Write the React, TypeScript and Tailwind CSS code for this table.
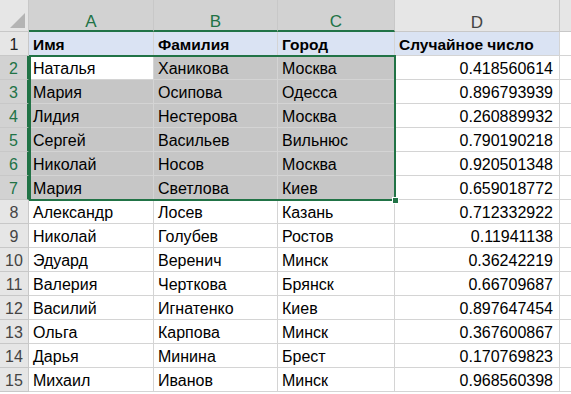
import React from 'react';

const rows = [
  ['Наталья', 'Ханикова', 'Москва', '0.418560614'],
  ['Мария', 'Осипова', 'Одесса', '0.896793939'],
  ['Лидия', 'Нестерова', 'Москва', '0.260889932'],
  ['Сергей', 'Васильев', 'Вильнюс', '0.790190218'],
  ['Николай', 'Носов', 'Москва', '0.920501348'],
  ['Мария', 'Светлова', 'Киев', '0.659018772'],
  ['Александр', 'Лосев', 'Казань', '0.712332922'],
  ['Николай', 'Голубев', 'Ростов', '0.11941138'],
  ['Эдуард', 'Веренич', 'Минск', '0.36242219'],
  ['Валерия', 'Черткова', 'Брянск', '0.66709687'],
  ['Василий', 'Игнатенко', 'Киев', '0.897647454'],
  ['Ольга', 'Карпова', 'Минск', '0.367600867'],
  ['Дарья', 'Минина', 'Брест', '0.170769823'],
  ['Михаил', 'Иванов', 'Минск', '0.968560398'],
];

const cols = ['A', 'B', 'C', 'D'];

export default function App() {
  return (
    <div className="relative w-[571px] h-[394px] overflow-hidden bg-white text-[16px] text-black" style={{ fontFamily: '"Liberation Sans", Arial, sans-serif' }}>
      <div className="grid grid-cols-[29px_125px_124px_117px_165px_1fr]">
        {/* column header row */}
        <div className="relative h-[32px] bg-[#e6e6e6] border-r border-b border-[#c8c8c8]">
          <div className="absolute right-[3px] bottom-[3px] w-0 h-0 border-l-[15px] border-l-transparent border-b-[15px] border-b-[#b4b4b4]" />
        </div>
        {cols.map((c) => {
          const sel = c !== 'D';
          return (
            <div
              key={c}
              className={`h-[32px] flex items-center justify-center pt-[14px] text-[17px] border-r border-[#c8c8c8] ${sel ? 'bg-[#d2d2d2] text-[#217346] border-b-2 border-b-[#217346]' : 'bg-[#e6e6e6] text-[#444] border-b border-b-[#c8c8c8]'}`}
            >
              {c}
            </div>
          );
        })}
        <div className="h-[32px] bg-[#e6e6e6] border-b border-[#c8c8c8]" />

        {/* row 1 */}
        <div className="h-[24px] flex items-center justify-center pt-[3px] bg-[#e6e6e6] text-[#222] border-r border-b border-[#c8c8c8]">1</div>
        {['Имя', 'Фамилия', 'Город', 'Случайное число'].map((t) => (
          <div key={t} className="h-[24px] flex items-center pl-[4px] pt-[3px] text-[15.5px] font-bold bg-[#dae3f3] border-r border-b border-[#d4d4d4]">
            {t}
          </div>
        ))}
        <div className="h-[24px] border-b border-[#d4d4d4]" />

        {rows.map((r, i) => {
          const n = i + 2;
          const selRow = n <= 7;
          return (
            <React.Fragment key={n}>
              <div
                className={`h-[24px] flex items-center justify-center pt-[3px] border-b border-[#c8c8c8] ${selRow ? 'bg-[#d2d2d2] text-[#217346] border-r-2 border-r-[#217346]' : 'bg-[#e6e6e6] text-[#444] border-r border-r-[#c8c8c8]'}`}
              >
                {n}
              </div>
              {r.slice(0, 3).map((t, j) => {
                const shade = selRow && !(n === 2 && j === 0);
                return (
                  <div key={j} className={`h-[24px] flex items-center pl-[4px] pt-[3px] border-r border-b border-[#d4d4d4] ${shade ? 'bg-[#c6c6c6] border-[#b8b8b8]' : 'bg-white'}`}>
                    {t}
                  </div>
                );
              })}
              <div className="h-[24px] flex items-center justify-end pr-[6px] pt-[3px] border-r border-b border-[#d4d4d4]">{r[3]}</div>
              <div className="h-[24px] border-b border-[#d4d4d4]" />
            </React.Fragment>
          );
        })}
      </div>

      {/* selection outline A2:C7 */}
      <div className="absolute left-[29px] top-[55px] w-[367px] h-[146px] border-2 border-[#217346] pointer-events-none" />
      <div className="absolute left-[392px] top-[197px] w-[7px] h-[7px] bg-[#217346] border border-white" />
    </div>
  );
}
